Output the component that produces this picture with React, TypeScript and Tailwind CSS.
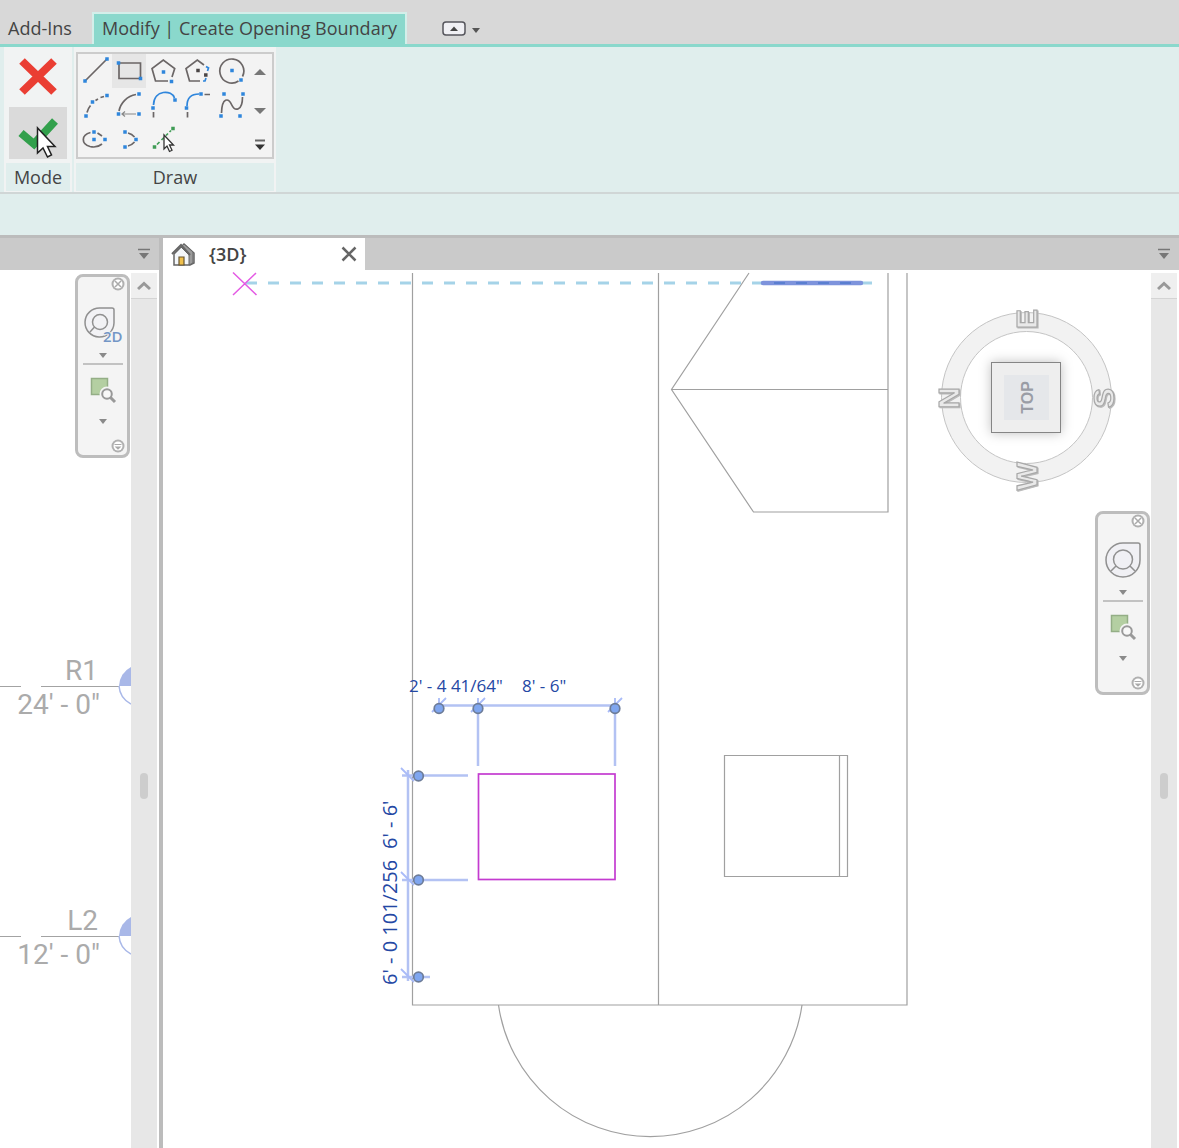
import React, { useState } from 'react';

const UI_FONT = "font-['Open_Sans','Noto_Sans',sans-serif]";

interface Dot {
  x: number;
  y: number;
  color?: string;
}

interface DrawTool {
  id: string;
  name: string;
  shape: React.ReactNode;
  dots: Dot[];
  overlay?: React.ReactNode;
}

const BLUE = '#2f86dc';
const DARK = '#4a4545';
const GREEN = '#3f9c55';

const draw_tools: DrawTool[] = [
  {
    id: 'line',
    name: 'Line',
    shape: <path d="M7 27L29 5" />,
    dots: [{ x: 7, y: 27 }, { x: 29, y: 5 }],
  },
  {
    id: 'rectangle',
    name: 'Rectangle',
    shape: <path d="M7 9H28.5V24.5H7Z" />,
    dots: [{ x: 6.5, y: 9 }, { x: 28.5, y: 24.5 }],
  },
  {
    id: 'inscribed-polygon',
    name: 'Inscribed Polygon',
    shape: <path d="M22 27H9.5L6 14.5L17.3 6L28.7 14.5L26 23" />,
    dots: [{ x: 17.5, y: 18 }, { x: 25.5, y: 27.5 }],
  },
  {
    id: 'circumscribed-polygon',
    name: 'Circumscribed Polygon',
    shape: (
      <>
        <path d="M20 27H9.5L6 14.5L17.3 6L24 11" />
        <path d="M26 12.5L28.5 14L27.5 17M26 24L25 27H23" stroke={BLUE} />
      </>
    ),
    dots: [{ x: 18, y: 16.5, color: DARK }, { x: 25.8, y: 21, color: DARK }],
  },
  {
    id: 'circle',
    name: 'Circle',
    shape: <path d="M24.5 27A12 12 0 1 1 28.5 22.5" />,
    dots: [{ x: 18, y: 16.5 }, { x: 27, y: 26 }],
  },
  {
    id: 'start-end-radius-arc',
    name: 'Start-End-Radius Arc',
    shape: <path d="M9 24.5Q10 20.5 12.5 17.5M17.5 12.5L20 11M22.5 9.5L26 8.5" />,
    dots: [{ x: 8, y: 28 }, { x: 14.5, y: 14 }, { x: 29, y: 7.5 }],
  },
  {
    id: 'center-ends-arc',
    name: 'Center-ends Arc',
    shape: (
      <>
        <path d="M7 23C8.5 15 15 8 24 6.5" />
        <path d="M10 26H24M13 23.5L10 26L13 28.5" stroke="#888" strokeWidth="1.2" />
      </>
    ),
    dots: [{ x: 6.5, y: 26 }, { x: 27, y: 6 }, { x: 27, y: 26 }],
  },
  {
    id: 'tangent-end-arc',
    name: 'Tangent End Arc',
    shape: (
      <>
        <path d="M7.5 17C8 1.5 26 1.5 28.5 10" stroke={BLUE} />
        <path d="M7.5 24V29.5" />
      </>
    ),
    dots: [{ x: 7, y: 20 }, { x: 29, y: 12 }],
  },
  {
    id: 'fillet-arc',
    name: 'Fillet Arc',
    shape: (
      <>
        <path d="M7 18C7 10 11 6 19 6" stroke={BLUE} />
        <path d="M7.5 24V29.5M24.5 6.5H30" />
      </>
    ),
    dots: [{ x: 6.5, y: 20 }, { x: 21, y: 6 }],
  },
  {
    id: 'spline',
    name: 'Spline',
    shape: <path d="M7.5 25C8 9 14.5 10 17.5 16.5C21 24 28.5 23 28.5 9" />,
    dots: [{ x: 7, y: 28 }, { x: 10, y: 6 }, { x: 26, y: 28 }, { x: 29, y: 6 }],
  },
  {
    id: 'ellipse',
    name: 'Ellipse',
    shape: <path d="M12.5 10.5C3 13 3 22 12 24.5C16 25.5 21 24.5 24 22M19.5 11L24 14" />,
    dots: [{ x: 16, y: 10 }, { x: 16, y: 17.5 }, { x: 27, y: 17.5 }],
  },
  {
    id: 'partial-ellipse',
    name: 'Partial Ellipse',
    shape: <path d="M16 11Q20 12 22.5 15M22.5 20Q20 23 16 24" />,
    dots: [{ x: 13, y: 10 }, { x: 24, y: 17.5 }, { x: 13, y: 25 }],
  },
  {
    id: 'pick-lines',
    name: 'Pick Lines',
    shape: <path d="M11 22.5L13.5 20M15.5 18L18 15.5M20 13.5L22 11.5M23.5 10L25 8.5" stroke={GREEN} />,
    dots: [{ x: 8.5, y: 25, color: GREEN }, { x: 27, y: 6.5, color: GREEN }],
    overlay: (
      <path
        d="M18 13V27L21 24L23.5 29.5L26 28.3L23.5 23H27.5Z"
        fill="#fff"
        stroke="#333"
        strokeWidth="1.3"
      />
    ),
  },
];

const DrawToolIcon: React.FC<{ tool: DrawTool }> = ({ tool }) => (
  <svg width="34" height="34" viewBox="0 0 34 34" fill="none" stroke="#6b6666" strokeWidth="1.7">
    {tool.shape}
    {tool.dots.map((dot) => (
      <rect
        key={`${dot.x}-${dot.y}`}
        x={dot.x - 1.75}
        y={dot.y - 1.75}
        width="3.5"
        height="3.5"
        fill={dot.color ?? BLUE}
        stroke="none"
      />
    ))}
    {tool.overlay}
  </svg>
);

const RibbonTabs = () => (
  <nav className="flex h-[47px] items-end border-b-[3px] border-[#8ad8cc] bg-[#d8d8d8] text-[18px] leading-[24px] text-[#444]">
    <a href="#add-ins" className="w-[92px] pb-1 pl-2">Add-Ins</a>
    <a
      href="#modify"
      className="h-[32px] border-2 border-b-0 border-[#d3efea] bg-[#8ad8cc] px-2 pt-[2px] whitespace-nowrap"
    >
      Modify | Create Opening Boundary
    </a>
    <button type="button" aria-label="Minimize ribbon" className="mb-[7px] ml-[35px]">
      <svg width="40" height="16" viewBox="0 0 40 16">
        <rect x="1" y="1" width="22" height="13" rx="3" fill="#f0f0f4" stroke="#55555c" strokeWidth="1.5" />
        <path d="M8 10L12 5.5L16 10Z" fill="#444" />
        <path d="M30 7H38L34 12Z" fill="#555" />
      </svg>
    </button>
  </nav>
);

const ModePanel = () => (
  <section className="flex w-[68px] flex-col bg-[#f1f3f3]">
    <div className="flex h-[116px] flex-col items-center">
      <button type="button" aria-label="Cancel" className="flex h-[60px] w-[58px] items-center justify-center">
        <svg width="40" height="40" viewBox="0 0 40 40">
          <path d="M4 4L36 35M36 4L4 35" stroke="#ea3e33" strokeWidth="8" />
        </svg>
      </button>
      <button type="button" aria-label="Finish" className="relative h-[52px] w-[58px] bg-[#dadada]">
        <svg width="58" height="52" viewBox="0 0 58 52">
          <path d="M12 26L25 37L46 14" stroke="#32a04c" strokeWidth="8" fill="none" />
          <path
            d="M28.5 21V46L34 41L38.5 50L42.5 48L38.5 39.5H46Z"
            fill="#fff"
            stroke="#222"
            strokeWidth="1.5"
          />
        </svg>
      </button>
    </div>
    <h2 className="mx-[2px] h-[28px] bg-[#e0eeed] text-center text-[18px] leading-[28px] text-[#444]">Mode</h2>
  </section>
);

const DrawPanel = () => {
  const [activeTool, setActiveTool] = useState<string>('rectangle');

  return (
    <section className="flex w-[202px] flex-col bg-[#f1f3f3]">
      <div className="h-[116px] px-[2px] pt-[5px]">
        <div className="flex h-[107px] border-2 border-[#ccc] bg-[#f3f3f3]">
          <div className="grid w-[170px] grid-cols-5 content-start">
            {draw_tools.map((tool) => (
              <button
                key={tool.id}
                type="button"
                aria-label={tool.name}
                aria-pressed={activeTool === tool.id}
                onClick={() => setActiveTool(tool.id)}
                className={activeTool === tool.id ? 'h-[34px] bg-[#e6e6e6]' : 'h-[34px]'}
              >
                <DrawToolIcon tool={tool} />
              </button>
            ))}
          </div>
          <div className="flex flex-1 flex-col items-center">
            <button type="button" aria-label="Previous row" className="h-[36px]">
              <svg width="14" height="8" viewBox="0 0 14 8"><path d="M1 7L7 1L13 7Z" fill="#777" /></svg>
            </button>
            <button type="button" aria-label="Next row" className="h-[44px]">
              <svg width="14" height="8" viewBox="0 0 14 8"><path d="M1 1L7 7L13 1Z" fill="#777" /></svg>
            </button>
            <button type="button" aria-label="More" className="h-[24px]">
              <svg width="14" height="12" viewBox="0 0 14 12">
                <path d="M2 1.5H12" stroke="#666" strokeWidth="2" />
                <path d="M2 5.5H12L7 11Z" fill="#333" />
              </svg>
            </button>
          </div>
        </div>
      </div>
      <h2 className="mx-[2px] h-[28px] bg-[#e0eeed] text-center text-[18px] leading-[28px] text-[#444]">Draw</h2>
    </section>
  );
};

const TabListButton = () => (
  <button type="button" aria-label="List open views">
    <svg width="14" height="12" viewBox="0 0 14 12">
      <path d="M1 1.5H13" stroke="#777" strokeWidth="1.5" />
      <path d="M2 5H12L7 11Z" fill="#777" />
    </svg>
  </button>
);

const ScrollBar = () => (
  <div className="flex w-[28px] shrink-0 flex-col border-r-2 border-white bg-[#e7e7e7]">
    <button
      type="button"
      aria-label="Scroll up"
      className="flex h-[29px] items-center justify-center border-t-[3px] border-b border-t-white border-b-[#d4d4d4] bg-[#efefef]"
    >
      <svg width="14" height="10" viewBox="0 0 14 10">
        <path d="M1 8L7 2.5L13 8" fill="none" stroke="#999" strokeWidth="3" />
      </svg>
    </button>
    <div className="mt-[474px] h-[26px] w-[8px] self-center rounded-sm bg-[#cdcdcd]" />
  </div>
);

const NavDropArrow = () => (
  <svg width="8" height="6" viewBox="0 0 8 6"><path d="M0 0H8L4 5Z" fill="#8a8a8a" /></svg>
);

const NavigationBar: React.FC<{ flat?: boolean }> = ({ flat }) => (
  <div className="flex h-[184px] w-[55px] flex-col items-center rounded-lg border-[3px] border-[#bdbdbd] bg-[#f4f4f4]">
    <button type="button" aria-label="Close navigation bar" className="mr-[2px] self-end">
      <svg width="14" height="14" viewBox="0 0 14 14">
        <circle cx="7" cy="7" r="6.5" fill="#b0b0b0" />
        <circle cx="7" cy="7" r="4.5" fill="#fff" />
        <path d="M4 4L10 10M10 4L4 10" stroke="#aaa" strokeWidth="1.5" />
      </svg>
    </button>
    <button type="button" aria-label="Steering wheel" className="mt-[14px]">
      {flat ? (
        <svg width="42" height="40" viewBox="0 0 42 40">
          <g fill="#f2f2f5" stroke="#909090" strokeWidth="1.5">
            <path d="M18 3H30Q32 3 32 5V18A14.5 14.5 0 1 1 18 3Z" />
            <circle cx="18" cy="17" r="7.5" />
            <path d="M12.5 22L8 27" />
          </g>
          <text x="21" y="37" fontSize="15" fontWeight="600" fill="#7396c6" stroke="#f4f4f4" strokeWidth="2" paintOrder="stroke">2D</text>
        </svg>
      ) : (
        <svg width="42" height="40" viewBox="0 0 42 40">
          <g fill="#f0f0f4" stroke="#909090" strokeWidth="1.5">
            <path d="M21 1H36Q38 1 38 3V18A17 17 0 1 1 21 1Z" />
            <circle cx="21" cy="17.5" r="9.500" />
            <path d="M14 24L9 29M28 24L33 29" />
          </g>
        </svg>
      )}
    </button>
    <button type="button" aria-label="Steering wheel options" className="mt-[8px]"><NavDropArrow /></button>
    <div className="mt-[4px] h-[2px] w-[40px] shrink-0 bg-[#c2c2c2]" />
    <button type="button" aria-label="Zoom region" className="mt-[12px]">
      <svg width="28" height="28" viewBox="0 0 28 28">
        <path d="M2.5 1.5H18.5V17.5H2.5Z" fill="#b4cfa2" stroke="#94ae86" strokeWidth="1.5" />
        <circle cx="18" cy="17" r="5" fill="#f4f4f4" stroke="#f4f4f4" strokeWidth="5" />
        <circle cx="18" cy="17" r="4.8" fill="#f8f8f8" stroke="#999" strokeWidth="2" />
        <path d="M21.5 20.5L26 25" stroke="#999" strokeWidth="3" />
      </svg>
    </button>
    <button type="button" aria-label="Zoom options" className="mt-[14px]"><NavDropArrow /></button>
    <button type="button" aria-label="Customize" className="mt-auto mr-[2px] mb-[2px] self-end">
      <svg width="14" height="14" viewBox="0 0 14 14">
        <circle cx="7" cy="7" r="6.5" fill="#b0b0b0" />
        <circle cx="7" cy="7" r="4.5" fill="#fff" />
        <path d="M3.5 5.5H10.5M5 8H9L7 10Z" fill="#aaa" stroke="#aaa" strokeWidth="1.2" />
      </svg>
    </button>
  </div>
);

interface Level {
  name: string;
  elevation: string;
  y: number;
}

const levels: Level[] = [
  { name: 'R1', elevation: `24' - 0"`, y: 686 },
  { name: 'L2', elevation: `12' - 0"`, y: 936 },
];

const ElevationDrawing = () => (
  <svg
    width="131"
    height="878"
    viewBox="0 270 131 878"
    className="block font-['Roboto','Open_Sans',sans-serif]"
  >
    {levels.map((level) => (
      <g key={level.name}>
        <path d={`M0 ${level.y}.5H21M41 ${level.y}.5H119`} stroke="#a3a3a3" />
        <path d={`M119 ${level.y}A22 22 0 0 1 131 ${level.y - 19}V${level.y}Z`} fill="#a9b8e8" />
        <path d={`M119 ${level.y}A22 22 0 0 0 131 ${level.y + 18}`} fill="none" stroke="#a9b8e8" strokeWidth="1.5" />
        <text x="98" y={level.y - 6} textAnchor="end" fontSize="28" fill="#ababab">{level.name}</text>
        <text x="100" y={level.y + 28} textAnchor="end" fontSize="28" fill="#ababab">{level.elevation}</text>
      </g>
    ))}
  </svg>
);

const top_grips = [439, 478, 615];
const side_grips = [776, 880, 977];

const PlanDrawing = () => (
  <svg width="988" height="878" viewBox="163 270 988 878" className="block">
    {/* roof outline */}
    <g fill="none" stroke="#a0a0a0" strokeWidth="1.2">
      <path d="M412.5 273V1005H907V273" />
      <path d="M658.5 273V1005" />
      <path d="M749 273L671.5 389.5L753.5 512H888V273M671.5 389.5H888" />
      <path d="M724.5 755.5H847.5V876.5H724.5ZM839.5 755.5V876.5" />
      <path d="M498.5 1005A153.3 153.3 0 0 0 802 1005" />
    </g>

    {/* reference plane */}
    <path d="M246 283H872" stroke="#a5d3e8" strokeWidth="3" strokeDasharray="11 11" />
    <path d="M763 283H861" stroke="#7d93dc" strokeWidth="4.5" strokeLinecap="round" />
    <path d="M774 283H862" stroke="#5a7fd0" strokeWidth="2" strokeDasharray="11 11" />
    <path d="M233 272.5L256.5 295M256 273L233 295" stroke="#e45ae4" strokeWidth="1.5" />

    {/* temporary dimensions */}
    <g stroke="#b3c2f3" strokeWidth="2.5" fill="none">
      <path d="M439 705.5H615M478 708V766M615 708V766" />
      <path d="M408 770V981M402 775.5H468M402 880H468M402 977H430" />
    </g>
    <g stroke="#a9bbf8" strokeWidth="1.8">
      {top_grips.map((x) => <path key={x} d={`M${x - 7} 712L${x + 7} 698M${x} 698V708`} />)}
      {side_grips.map((y) => <path key={y} d={`M401 ${y - 8}L414 ${y + 5}`} />)}
    </g>
    <g fill="#7fa6f0" stroke="#6d7c98" strokeWidth="1.7">
      {top_grips.map((x) => <circle key={x} cx={x} cy="708.5" r="4.8" />)}
      {side_grips.map((y) => <circle key={y} cx="418.5" cy={y} r="4.8" />)}
    </g>
    <g fill="#2448a4" fontSize="17" fontWeight="500">
      <text x="409" y="692">2' - 4 41/64"</text>
      <text x="522" y="692">8' - 6"</text>
      <text transform="translate(397 985) rotate(-90)" fontSize="20">6' - 0 101/256</text>
      <rect x="380" y="795" width="20" height="66" fill="#fff" />
      <text transform="translate(397 849) rotate(-90)" fontSize="20">6' - 6'</text>
    </g>

    <rect x="478.5" y="774" width="136.5" height="105.5" fill="none" stroke="#c43bd0" strokeWidth="1.7" />
  </svg>
);

const ViewCube = () => (
  <svg width="190" height="190" viewBox="931 303 190 190" className="font-['Liberation_Sans',Arial,sans-serif]">
    <circle cx="1026.5" cy="397.5" r="75.5" fill="none" stroke="#f2f2f2" strokeWidth="19" />
    <circle cx="1026.5" cy="397.5" r="85" fill="none" stroke="#c4c4c4" />
    <circle cx="1026.5" cy="397.5" r="66" fill="none" stroke="#c4c4c4" />
    <g
      fill="#e9e9e9"
      stroke="#a8a8a8"
      strokeWidth="1.2"
      fontSize="30"
      fontWeight="700"
      textAnchor="middle"
      className="drop-shadow-[1px_1px_0_#bbb]"
    >
      <text transform="translate(1037 319) rotate(-90)">E</text>
      <text transform="translate(959 398) rotate(-90)">N</text>
      <text transform="translate(1114 398) rotate(-90)">S</text>
      <text transform="translate(1037 476) rotate(-90)">W</text>
    </g>
    <rect
      x="991.5"
      y="362.5"
      width="69"
      height="70"
      fill="#eeeeee"
      stroke="#858585"
      className="drop-shadow-[0_0_6px_rgba(0,0,0,0.25)]"
    />
    <rect x="1004" y="375" width="45" height="45" fill="#e5e7ea" />
    <text
      transform="translate(1033 397.5) rotate(-90)"
      textAnchor="middle"
      fontSize="16"
      fontWeight="700"
      fill="#9a9da5"
    >
      TOP
    </text>
  </svg>
);

const App: React.FC = () => (
  <div className={`flex min-h-screen flex-col overflow-hidden bg-white ${UI_FONT}`}>
    <RibbonTabs />
    <div className="flex h-[147px] gap-[2px] border-b-2 border-[#d0d6d6] bg-[#e0eeed] pl-1">
      <ModePanel />
      <DrawPanel />
    </div>
    <div className="h-[41px] bg-[#e0eeed]" />

    <main className="flex flex-1 border-t-[3px] border-[#bcbcbc]">
      <section className="flex w-[159px] shrink-0 flex-col">
        <header className="flex h-[32px] items-center justify-end bg-[#cacaca] pr-2">
          <TabListButton />
        </header>
        <div className="flex flex-1">
          <div className="relative flex-1 overflow-hidden">
            <ElevationDrawing />
            <div className="absolute top-1 right-[1px]">
              <NavigationBar flat />
            </div>
          </div>
          <ScrollBar />
        </div>
      </section>

      <section className="flex min-w-0 flex-1 flex-col border-l-4 border-[#bcbcbc]">
        <header className="flex h-[32px] items-center justify-between bg-[#cacaca] pr-2">
          <div className="flex h-full w-[202px] items-center bg-white px-2">
            <svg width="24" height="26" viewBox="0 0 24 26">
              <path d="M3 13L13 3L23 12V22L19 24H3Z" fill="#f4f7fa" stroke="#666" strokeWidth="1.5" />
              <path d="M13 3L22 11V22L18 24V14L10 6Z" fill="#9b9b9b" stroke="#666" />
              <path d="M1 13L10 4L19 14" fill="none" stroke="#666" strokeWidth="2" />
              <path d="M8 16H13V24H8Z" fill="#f0c04c" stroke="#665533" strokeWidth="1.2" />
            </svg>
            <span className="ml-[14px] flex-1 text-[18px] leading-[24px] font-semibold text-[#444]">{'{3D}'}</span>
            <button type="button" aria-label="Close view">
              <svg width="16" height="16" viewBox="0 0 16 16">
                <path d="M1.5 1.5L14.5 14.5M14.5 1.5L1.5 14.5" stroke="#666" strokeWidth="2.5" />
              </svg>
            </button>
          </div>
          <TabListButton />
        </header>
        <div className="flex flex-1">
          <div className="relative min-w-0 flex-1 overflow-hidden">
            <PlanDrawing />
            <div className="absolute top-[33px] right-[30px]">
              <ViewCube />
            </div>
            <div className="absolute top-[241px] right-[1px]">
              <NavigationBar />
            </div>
          </div>
          <ScrollBar />
        </div>
      </section>
    </main>
  </div>
);

export default App;
